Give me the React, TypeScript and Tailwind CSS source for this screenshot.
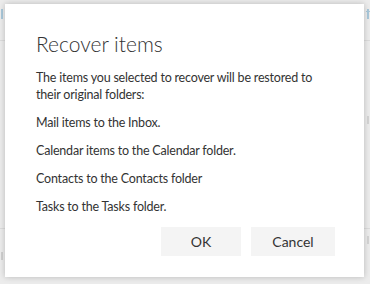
import React from "react";

export default function App() {
  const font = { fontFamily: 'Lato, "Open Sans", sans-serif' };
  return (
    <div className="relative w-[370px] h-[284px] overflow-hidden bg-[#ececec]" style={font}>
      {/* faint background content */}
      <div className="absolute left-0 top-0 w-full h-full">
        <div className="absolute left-[1px] top-[9px] w-[2px] h-[10px] bg-[#a9c8da]" />
        <div className="absolute left-[367px] top-[9px] w-[2px] h-[10px] bg-[#a9c8da]" />
        <div className="absolute left-[366px] top-[11px] w-[4px] h-[1px] bg-[#a9c8da]" />
        <div className="absolute left-0 top-[40px] w-full h-px bg-[#dcdcdc]" />
        <div className="absolute left-0 top-[228px] w-full h-px bg-[#dcdcdc]" />
        <div className="absolute left-[1px] top-[252px] w-[2px] h-[8px] bg-[#cfcfcf]" />
        <div className="absolute left-[367px] top-[116px] w-[2px] h-[8px] bg-[#d4d4d4]" />
        <div className="absolute left-[367px] top-[236px] w-[2px] h-[8px] bg-[#d4d4d4]" />
      </div>
      {/* dialog */}
      <div className="absolute left-[5px] top-[4px] w-[359px] h-[273px] bg-white shadow-[0_0_6px_rgba(0,0,0,0.22)] flex flex-col pl-[31px] pr-[29px] pt-[26px] pb-[21px]">
        <h1 className="text-[21px] leading-[28px] font-light text-[#333333]">Recover items</h1>
        <div className="mt-[11px] text-[12.5px] tracking-[-0.2px] leading-[17px] text-[#333333] flex flex-col gap-[11px]">
          <p>The items you selected to recover will be restored to their original folders:</p>
          <p>Mail items to the Inbox.</p>
          <p>Calendar items to the Calendar folder.</p>
          <p>Contacts to the Contacts folder</p>
          <p>Tasks to the Tasks folder.</p>
        </div>
        <div className="mt-auto flex justify-end gap-[10px]">
          <button className="w-[80px] h-[29px] bg-[#f4f4f4] text-[14px] text-[#333333]">OK</button>
          <button className="w-[84px] h-[29px] bg-[#f4f4f4] text-[14px] text-[#333333]">Cancel</button>
        </div>
      </div>
    </div>
  );
}
